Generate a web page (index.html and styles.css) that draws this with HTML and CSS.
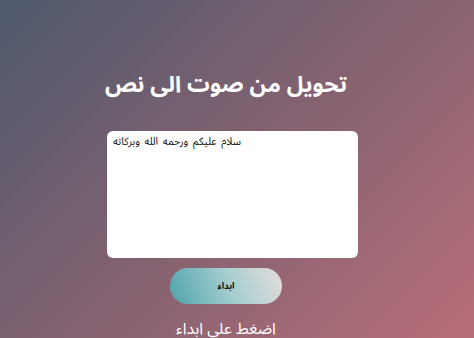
FILE: index.html
```html
<!DOCTYPE html>
<html lang="ar">
<head>
<meta charset="utf-8">
<link rel="stylesheet" href="styles.css">
</head>
<body>
<main class="page">
  <h1 class="title">تحويل من صوت الى نص</h1>
  <textarea class="box" dir="ltr">سلام عليكم ورحمه الله وبركاته</textarea>
  <button class="start">ابداء</button>
  <p class="hint">اضغط على ابداء</p>
</main>
</body>
</html>
```
FILE: styles.css
```css
html, body {
  margin: 0;
  padding: 0;
  height: 100%;
}
body {
  background: linear-gradient(135deg, #4e596d 0%, #7e6170 45%, #b86e79 100%);
  overflow: hidden;
  font-family: "Noto Sans Arabic", "DejaVu Sans", sans-serif;
}
.page {
  display: flex;
  flex-direction: column;
  align-items: center;
  width: 452px;
  padding-top: 66px;
}
.title {
  margin: 0;
  color: #fff;
  font-size: 22.5px;
  font-weight: bold;
  line-height: 38px;
  direction: rtl;
}
.box {
  margin: 27px 0 0 13px;
  width: 251px;
  height: 127px;
  box-sizing: border-box;
  border: none;
  border-radius: 6px;
  background: #fff;
  padding: 4px 6px;
  font-family: "Noto Sans Arabic", "DejaVu Sans", sans-serif;
  font-size: 10.5px;
  line-height: 14px;
  word-spacing: 2px;
  color: #111;
  resize: none;
  text-align: left;
}
.start {
  margin-top: 10px;
  width: 112px;
  height: 36px;
  border: none;
  border-radius: 18px;
  background: linear-gradient(70deg, #4ea3aa 0%, #a8cfd1 55%, #e4dcdb 100%);
  font-family: "Noto Sans Arabic", "DejaVu Sans", sans-serif;
  font-size: 9px;
  font-weight: bold;
  color: #111;
}
.hint {
  margin: 14px 0 0;
  color: #fff;
  font-size: 16px;
  line-height: 22px;
  direction: rtl;
}
```
